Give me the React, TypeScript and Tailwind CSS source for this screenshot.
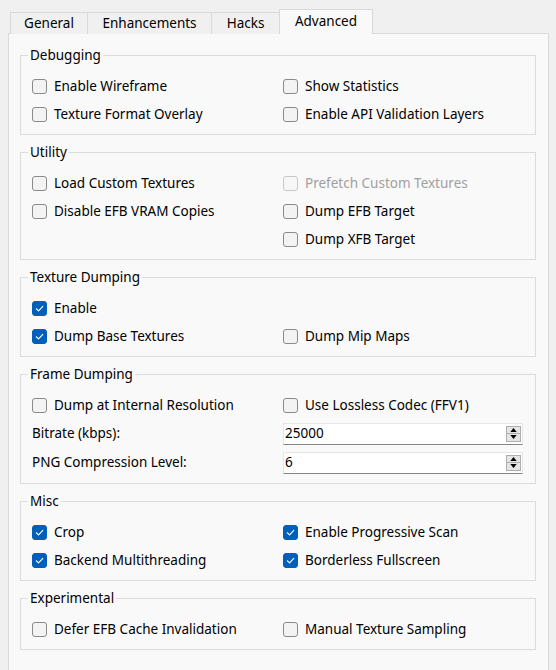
import type { ReactNode } from "react";

type CheckProps = {
	label: string;
	checked?: boolean;
	disabled?: boolean;
};

function CheckBox(props: CheckProps) {
	const { label, checked, disabled } = props;

	return (
		<div className="flex h-[28px] items-center gap-[7px]">
			<span
				className={
					checked
						? "flex size-[15px] items-center justify-center rounded-[3px] border border-[#005fb8] bg-[#005fb8]"
						: disabled
							? "flex size-[15px] items-center justify-center rounded-[3px] border border-[#c9c9c9] bg-[#f7f7f7]"
							: "flex size-[15px] items-center justify-center rounded-[3px] border border-[#8a8a8a] bg-[#f3f3f3]"
				}
			>
				{checked && (
					<svg viewBox="0 0 12 12" className="size-[11px]">
						<polyline
							points="2.5,6.3 5,8.6 9.6,3.6"
							fill="none"
							stroke="white"
							strokeWidth="1.2"
							strokeLinecap="round"
							strokeLinejoin="round"
						/>
					</svg>
				)}
			</span>
			<span className={disabled ? "text-[#a0a0a0]" : "text-black"}>{label}</span>
		</div>
	);
}

function SpinBox(props: { value: string }) {
	return (
		<div
			className="flex h-[22px] w-[240px] items-stretch border border-[#e6e6e6] border-b-[#868686] bg-white
				pl-[1px]"
		>
			<span className="flex flex-1 items-center">{props.value}</span>
			<div className="my-[2px] mr-[1px] flex w-[15px] flex-col">
				<span className="flex flex-1 items-center justify-center border border-[#adadad] bg-[#e5e5e5]">
					<svg viewBox="0 0 8 5" className="h-[4px] w-[7px]">
						<polygon points="0,5 8,5 4,0" fill="black" />
					</svg>
				</span>
				<span
					className="flex flex-1 items-center justify-center border border-t-0 border-[#adadad]
						bg-[#e5e5e5]"
				>
					<svg viewBox="0 0 8 5" className="h-[4px] w-[7px]">
						<polygon points="0,0 8,0 4,5" fill="black" />
					</svg>
				</span>
			</div>
		</div>
	);
}

function Group(props: { title: string; children: ReactNode }) {
	return (
		<fieldset className="border border-[#dcdcdc]">
			<legend className="ml-[7px] h-[18px] px-[2px] leading-[18px]">{props.title}</legend>
			<div className="grid grid-cols-[251px_1fr] px-[11px] pt-[8px] pb-[6px]">{props.children}</div>
		</fieldset>
	);
}

const tabs = [
	{ label: "General", width: "w-[78px]" },
	{ label: "Enhancements", width: "w-[125px]" },
	{ label: "Hacks", width: "w-[69px]" },
];

export default function App() {
	return (
		<div
			className="flex h-[670px] w-[556px] flex-col bg-[#f0f0f0] pr-[7px] pl-[8px] text-[13.5px] text-black"
			style={{ fontFamily: '"Noto Sans", "Liberation Sans", sans-serif' }}
		>
			<div className="z-10 -mb-px flex h-[34px] items-end pl-[2px]">
				{tabs.map((tab) => (
					<div
						key={tab.label}
						className={`-ml-px flex h-[22px] items-center justify-center border border-b-0 border-[#d9d9d9]
							bg-[#f0f0f0] first:ml-0 ${tab.width}`}
					>
						{tab.label}
					</div>
				))}
				<div
					className="-ml-px flex h-[25px] w-[94px] items-center justify-center border border-b-0
						border-[#d9d9d9] bg-[#f9f9f9] pb-[1px]"
				>
					Advanced
				</div>
			</div>

			<div
				className="flex flex-1 flex-col gap-[8px] border border-b-0 border-[#dadada] bg-[#f9f9f9] pt-[12px]
					pr-[12px] pl-[11px]"
			>
				<Group title="Debugging">
					<CheckBox label="Enable Wireframe" />
					<CheckBox label="Show Statistics" />
					<CheckBox label="Texture Format Overlay" />
					<CheckBox label="Enable API Validation Layers" />
				</Group>

				<Group title="Utility">
					<CheckBox label="Load Custom Textures" />
					<CheckBox label="Prefetch Custom Textures" disabled />
					<CheckBox label="Disable EFB VRAM Copies" />
					<CheckBox label="Dump EFB Target" />
					<span />
					<CheckBox label="Dump XFB Target" />
				</Group>

				<Group title="Texture Dumping">
					<CheckBox label="Enable" checked />
					<span />
					<CheckBox label="Dump Base Textures" checked />
					<CheckBox label="Dump Mip Maps" />
				</Group>

				<Group title="Frame Dumping">
					<CheckBox label="Dump at Internal Resolution" />
					<CheckBox label="Use Lossless Codec (FFV1)" />
					<div className="flex h-[29px] items-center">Bitrate (kbps):</div>
					<div className="flex h-[29px] items-center">
						<SpinBox value="25000" />
					</div>
					<div className="flex h-[29px] items-center">PNG Compression Level:</div>
					<div className="flex h-[29px] items-center">
						<SpinBox value="6" />
					</div>
				</Group>

				<Group title="Misc">
					<CheckBox label="Crop" checked />
					<CheckBox label="Enable Progressive Scan" checked />
					<CheckBox label="Backend Multithreading" checked />
					<CheckBox label="Borderless Fullscreen" checked />
				</Group>

				<Group title="Experimental">
					<CheckBox label="Defer EFB Cache Invalidation" />
					<CheckBox label="Manual Texture Sampling" />
				</Group>
			</div>
		</div>
	);
}
